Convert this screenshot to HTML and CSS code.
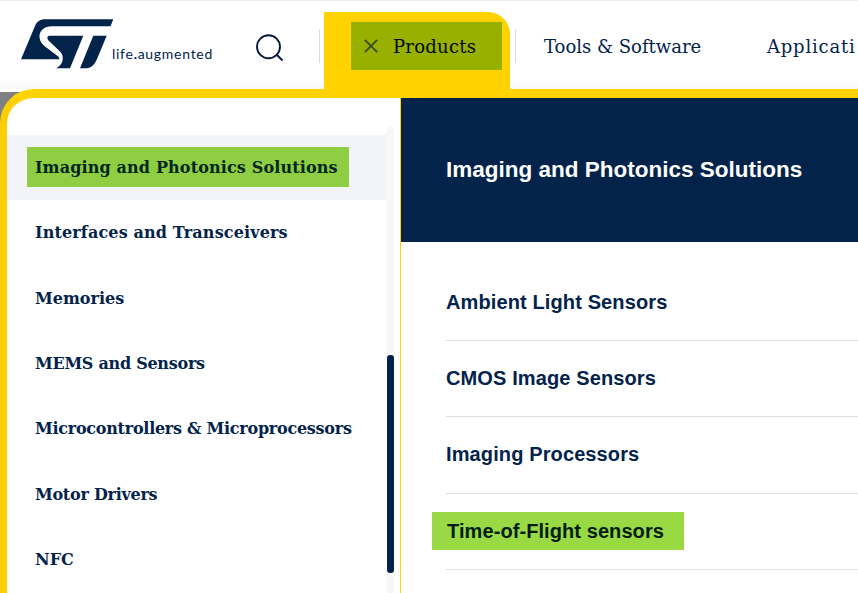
FILE: index.html
```
<!DOCTYPE html>
<html lang="en">
<head>
    <meta charset="UTF-8">
    <meta name="viewport" content="width=device-width, initial-scale=1.0">
    <title>Products - STMicroelectronics</title>
    <link rel="stylesheet" href="styles.css">
</head>
<body>

    <header class="header">
        <a class="logo">
            <svg class="logo-mark" width="93" height="50" viewBox="0 0 93 50" fill="#03234b">
                <path d="M24 .3H92.300L89.500 7.300H31C23 7.300 18 12 18.500 18.500C19 22.500 21 25 24 27.500L36 36.500C38 38 38.500 39 38.300 40.300H0L14 7C16 2.500 19 .3 24 .3Z"/>
                <path d="M28.500 16.700H62.300L49 49.300H35C39 47.500 41.800 43.500 41.800 39.500C41.800 36.500 41 34.500 38.500 32L28.500 22.500C25.500 19.500 26 16.700 28.500 16.700Z" stroke="none"/>
                <path d="M72.300 16.700H85.700L76 40C73.500 46 70 49.300 64 49.300H59Z"/>
            </svg>
            <span class="tagline">life<b>.</b>augmented</span>
        </a>
        <svg class="search" width="28" height="28" viewBox="0 0 28 28" fill="none" stroke="#0f1b3d" stroke-width="1.9">
            <circle cx="12.500" cy="12.800" r="11.500"/>
            <path d="M20.500 20.500L26.500 26.500"/>
        </svg>
        <nav class="nav">
            <a class="nav-item active">
                <span class="mark">
                    <svg width="14" height="14" viewBox="0 0 14 14" stroke="#344b1c" stroke-width="1.8"><path d="M.8.8L13.200 13.200M13.200.8L.8 13.200"/></svg>
                    <span class="products">Products</span>
                </span>
            </a>
            <a class="nav-item tools"><span>Tools &amp; Software</span></a>
            <a class="nav-item apps"><span>Applicati</span></a>
        </nav>
    </header>

    <main class="menu">
        <div class="categories">
            <ul>
                <li class="selected"><span>Imaging and Photonics Solutions</span></li>
                <li class="wide">Interfaces and Transceivers</li>
                <li>Memories</li>
                <li class="narrow">MEMS and Sensors</li>
                <li class="narrow">Microcontrollers &amp; Microprocessors</li>
                <li class="narrow">Motor Drivers</li>
                <li>NFC</li>
            </ul>
            <div class="scrollbar"><div class="thumb"></div></div>
        </div>
        <section class="panel">
            <h2>Imaging and Photonics Solutions</h2>
            <ul>
                <li>Ambient Light Sensors</li>
                <li>CMOS Image Sensors</li>
                <li>Imaging Processors</li>
                <li class="found"><span>Time-of-Flight sensors</span></li>
            </ul>
        </section>
    </main>

</body>
</html>
```

FILE: styles.css
```
* {
    box-sizing: border-box;
}

body {
    margin: 0;
    height: 593px;
    overflow: hidden;
    background: linear-gradient(#fff 92px, #808083 92px);
    color: #03234b;
    font-family: "Liberation Sans", Arial, sans-serif;
}

ul {
    margin: 0;
    padding: 0;
    list-style: none;
}

.header {
    display: flex;
    height: 89px;
    border-top: 1px solid #ebebeb;
    background: linear-gradient(#fff 78px, #f8f8f8);
    overflow: hidden;
}

.logo {
    display: flex;
    width: 235px;
    padding: 18px 0 0 21px;
    flex-shrink: 0;
}

.logo-mark {
    flex-shrink: 0;
}

.tagline {
    margin-top: 26px;
    margin-left: -2px;
    font-family: Lato, "Liberation Sans", sans-serif;
    font-size: 14px;
    line-height: 18px;
    letter-spacing: 0.72px;
}

.search {
    flex-shrink: 0;
    margin: 33px 35px 0 21px;
}

.nav {
    display: flex;
    width: 539px;
    flex-shrink: 0;
    font-family: "DejaVu Serif", serif;
    font-size: 18px;
    line-height: 34px;
    white-space: nowrap;
}

.nav::before,
.tools::before {
    content: "";
    width: 1px;
    height: 34px;
    margin-top: 28px;
    background: #ddd;
    flex-shrink: 0;
}

.nav-item {
    flex-shrink: 0;
}

.active {
    width: 186px;
    height: 77px;
    margin: 11px 5px 0 4px;
    padding: 10px 0 0 27px;
    border-radius: 0 22px 0 0;
    background: #ffd200;
}

.mark {
    display: flex;
    align-items: center;
    width: 151px;
    height: 48px;
    padding-left: 13px;
    gap: 15px;
    background: #98b000;
    color: #000a05;
}

.products {
    padding-top: 2px;
    letter-spacing: 0.25px;
}

.tools {
    display: flex;
    width: 252px;
}

.tools span {
    margin: 29px 0 0 28px;
}

.apps {
    padding-top: 29px;
    letter-spacing: 0.8px;
}

.menu {
    display: flex;
    height: 520px;
    border-top: 9px solid #ffd200;
    border-left: 7px solid #fccf05;
    border-radius: 34px 0 0 0;
    background: #fff;
    overflow: hidden;
}

.categories {
    display: flex;
    width: 394px;
    border-right: 1px solid #ffd200;
    flex-shrink: 0;
}

.categories ul {
    width: 380px;
    padding-top: 37px;
}

.categories li {
    display: flex;
    align-items: center;
    height: 65.3px;
    padding: 1px 0 0 28px;
    font: bold 16px/24px "DejaVu Serif", serif;
    white-space: nowrap;
}

.categories .wide {
    letter-spacing: 0.15px;
}

.categories .narrow {
    letter-spacing: -0.26px;
}

.categories .selected {
    padding: 0 0 1.5px 20px;
    background: #f3f4f9;
    letter-spacing: 0.14px;
}

.selected span {
    width: 322px;
    padding: 9px 8px 7px;
    background: #8fce42;
    color: #02261f;
}

.scrollbar {
    width: 7px;
    height: 500px;
    margin-top: 28px;
    padding-top: 229px;
    border-radius: 3px;
    background: #f7f7f7;
}

.thumb {
    height: 218px;
    border-radius: 3px;
    background: #03234b;
}

.panel {
    flex: 1;
}

.panel h2 {
    margin: 0;
    height: 144px;
    padding-left: 45px;
    background: #03234b;
    color: #fff;
    font-size: 22.5px;
    line-height: 143px;
    white-space: nowrap;
}

.panel ul {
    margin-left: 45px;
    padding-top: 22.6px;
}

.panel li {
    height: 76.4px;
    border-bottom: 1px solid #ddd;
    font-weight: bold;
    font-size: 20px;
    line-height: 75.6px;
    letter-spacing: 0.12px;
}

.panel .found {
    padding-top: 18px;
}

.found span {
    display: block;
    width: 252px;
    height: 38px;
    margin-left: -14px;
    padding-left: 15px;
    background: #98d944;
    color: #021c14;
    line-height: 38px;
    letter-spacing: 0.08px;
}
```
